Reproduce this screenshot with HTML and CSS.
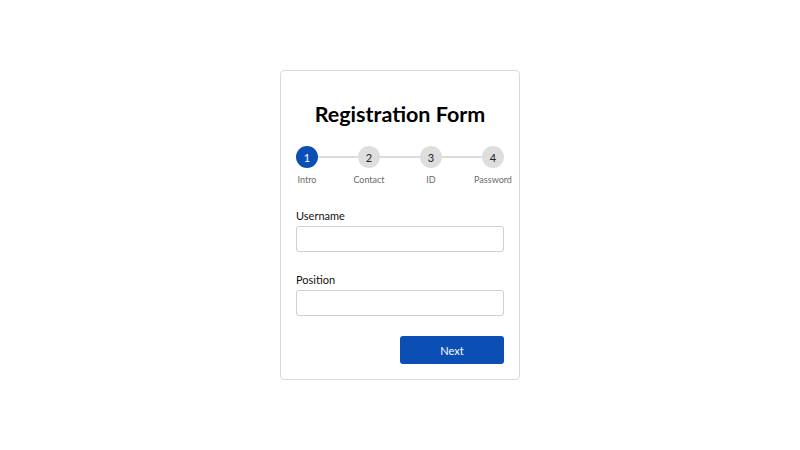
FILE: index.html
```html
<!DOCTYPE html>
<html lang="en">
<head>
<meta charset="utf-8">
<title>Registration Form</title>
<link rel="stylesheet" href="styles.css">
</head>
<body>
<div class="card">
  <h1 class="title">Registration Form</h1>
  <div class="stepper">
    <div class="step active"><span class="dot">1</span><span class="step-label">Intro</span></div>
    <div class="connector"></div>
    <div class="step"><span class="dot">2</span><span class="step-label">Contact</span></div>
    <div class="connector"></div>
    <div class="step"><span class="dot">3</span><span class="step-label">ID</span></div>
    <div class="connector"></div>
    <div class="step"><span class="dot">4</span><span class="step-label">Password</span></div>
  </div>
  <form class="form">
    <label class="field">
      <span class="field-label">Username</span>
      <input class="input" type="text">
    </label>
    <label class="field">
      <span class="field-label">Position</span>
      <input class="input" type="text">
    </label>
    <div class="actions">
      <button class="btn" type="button">Next</button>
    </div>
  </form>
</div>
</body>
</html>
```

FILE: styles.css
```css
html, body {
  margin: 0;
  padding: 0;
  background: #ffffff;
}
body {
  min-height: 100vh;
  display: flex;
  align-items: center;
  justify-content: center;
  font-family: Lato, "Noto Sans", "Liberation Sans", sans-serif;
  color: #111;
}
.card {
  width: 208px;
  border: 1px solid #d9d9d9;
  border-radius: 4px;
  padding: 28px 15px 15px;
  display: flex;
  flex-direction: column;
}
.title {
  margin: 0;
  font-size: 21.5px;
  line-height: 30px;
  font-weight: 700;
  text-align: center;
  color: #000;
}
.stepper {
  display: flex;
  align-items: flex-start;
  margin-top: 17px;
}
.step {
  width: 22px;
  display: flex;
  flex-direction: column;
  align-items: center;
}
.dot {
  width: 22px;
  height: 22px;
  border-radius: 50%;
  background: #dedede;
  color: #222;
  font-size: 11px;
  display: flex;
  align-items: center;
  justify-content: center;
}
.step.active .dot {
  background: #0b4fb5;
  color: #fff;
}
.step-label {
  margin-top: 6px;
  font-size: 9px;
  line-height: 12px;
  color: #6a6a6a;
  white-space: nowrap;
}
.connector {
  flex: 1;
  height: 2px;
  margin-top: 10px;
  background: #dcdcdc;
}
.form {
  display: flex;
  flex-direction: column;
  margin-top: 23px;
}
.field {
  display: flex;
  flex-direction: column;
  margin-bottom: 21px;
}
.field-label {
  font-size: 11px;
  line-height: 14px;
  color: #111;
  margin-bottom: 3px;
}
.input {
  box-sizing: border-box;
  height: 26px;
  width: 100%;
  border: 1px solid #cfcfcf;
  border-radius: 3px;
  margin: 0;
  padding: 0 8px;
  font: inherit;
}
.actions {
  display: flex;
  justify-content: flex-end;
  margin-top: -1px;
}
.btn {
  width: 104px;
  height: 28px;
  border: none;
  border-radius: 3px;
  background: #0b4fb5;
  color: #fff;
  font-family: inherit;
  font-size: 11px;
  cursor: pointer;
}
```
